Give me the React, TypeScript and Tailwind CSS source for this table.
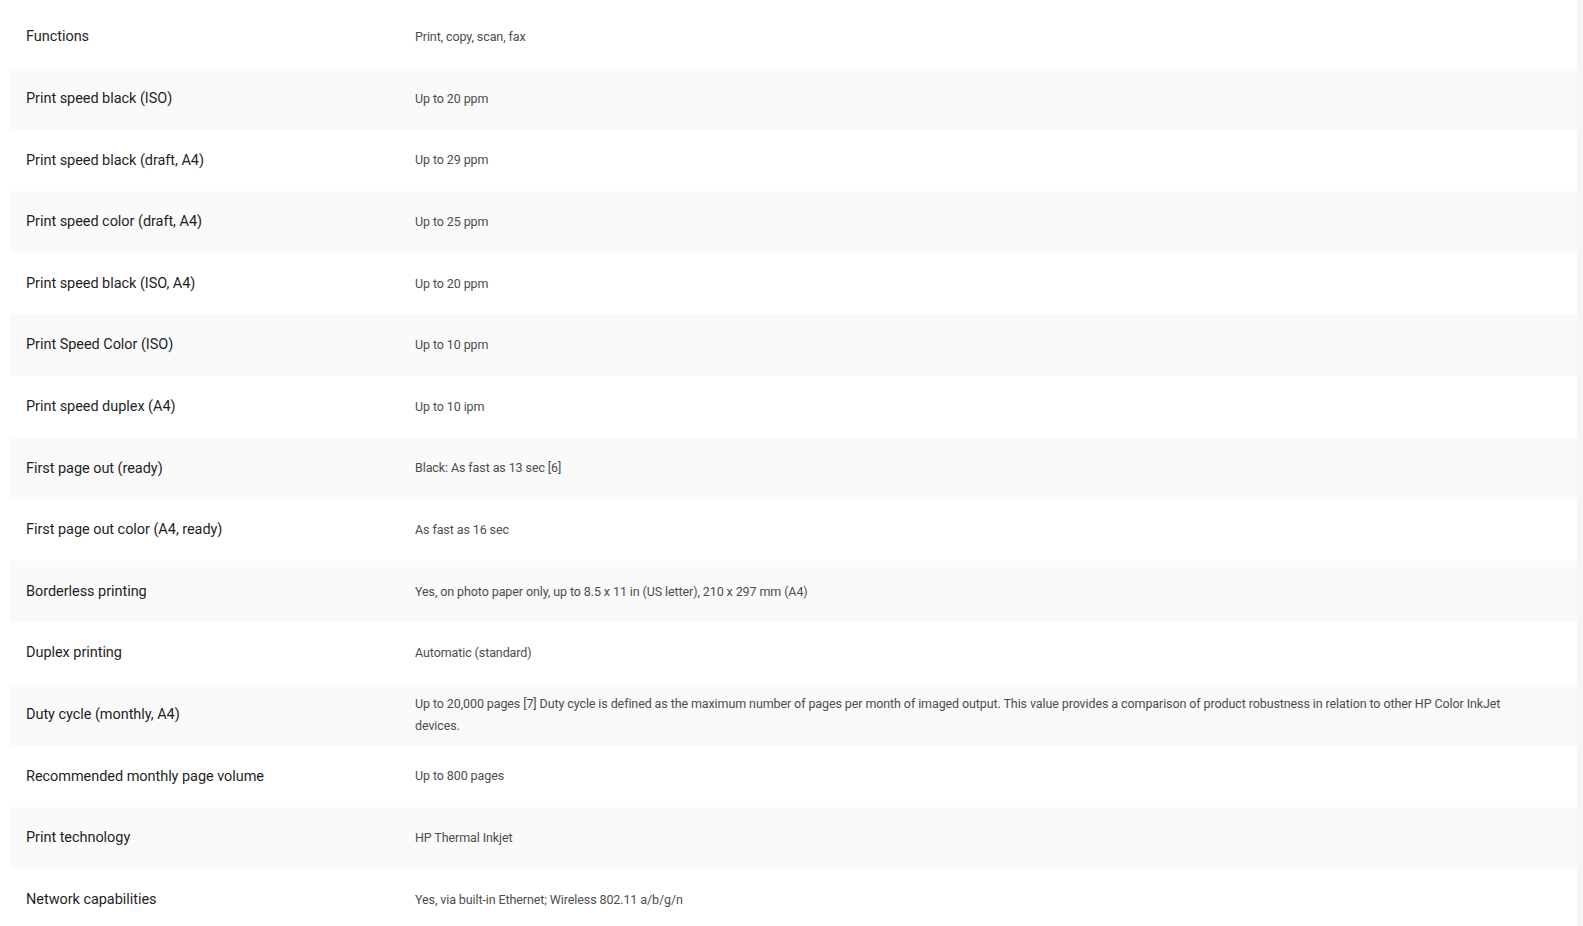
const SPECS: { label: string; value: string }[] = [
  { label: "Functions", value: "Print, copy, scan, fax" },
  { label: "Print speed black (ISO)", value: "Up to 20 ppm" },
  { label: "Print speed black (draft, A4)", value: "Up to 29 ppm" },
  { label: "Print speed color (draft, A4)", value: "Up to 25 ppm" },
  { label: "Print speed black (ISO, A4)", value: "Up to 20 ppm" },
  { label: "Print Speed Color (ISO)", value: "Up to 10 ppm" },
  { label: "Print speed duplex (A4)", value: "Up to 10 ipm" },
  { label: "First page out (ready)", value: "Black: As fast as 13 sec [6]" },
  { label: "First page out color (A4, ready)", value: "As fast as 16 sec" },
  { label: "Borderless printing", value: "Yes, on photo paper only, up to 8.5 x 11 in (US letter), 210 x 297 mm (A4)" },
  { label: "Duplex printing", value: "Automatic (standard)" },
  {
    label: "Duty cycle (monthly, A4)",
    value:
      "Up to 20,000 pages [7] Duty cycle is defined as the maximum number of pages per month of imaged output. This value provides a comparison of product robustness in relation to other HP Color InkJet devices.",
  },
  { label: "Recommended monthly page volume", value: "Up to 800 pages" },
  { label: "Print technology", value: "HP Thermal Inkjet" },
  { label: "Network capabilities", value: "Yes, via built-in Ethernet; Wireless 802.11 a/b/g/n" },
]

export default function App() {
  return (
    <div className="flex h-[926px] w-full overflow-hidden bg-white font-['Roboto',sans-serif]">
      <div className="flex-1 pl-[10px] pt-[6.5px]">
        {SPECS.map((row, i) => (
          <div
            key={row.label}
            className={`flex h-[61.6px] items-center px-4 ${i % 2 === 1 ? "bg-[#fafafa]" : "bg-white"}`}
          >
            <div className="w-[389px] shrink-0 text-[14.5px] tracking-[-0.05px] text-[#1f1f1f]">{row.label}</div>
            <div className="max-w-[1110px] flex-1 text-[12.5px] leading-[22px] tracking-[-0.1px] text-[#4d4d4d]">
              {row.value}
            </div>
          </div>
        ))}
      </div>
      <div className="w-[6px] shrink-0 bg-[#f6f6f8]" />
    </div>
  )
}
